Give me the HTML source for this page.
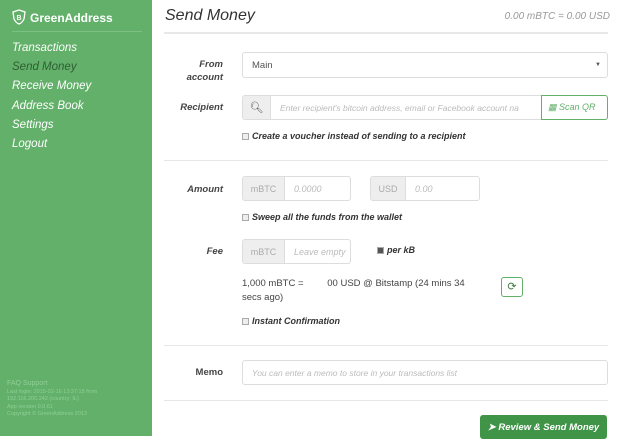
<!DOCTYPE html>
<html><head><style>
*{box-sizing:border-box;margin:0;padding:0}
body{width:624px;height:436px;overflow:hidden;background:#fff;font-family:"Liberation Sans",sans-serif;position:relative}
.sb{position:absolute;left:0;top:0;width:152px;height:436px;background:#62b06a}
.sb .brand{position:absolute;left:12px;top:9px;color:#fff;font-weight:bold;font-size:12px}
.sb .line{position:absolute;left:12px;right:10px;top:31px;border-top:1px solid #7cc183}
.nav{position:absolute;left:12px;top:39px;font-style:italic;font-size:11.5px;color:#fff;line-height:19.2px}
.nav .act{color:#2f5e33}
.foot{position:absolute;left:7px;top:380px;font-size:5.5px;color:#8fd095;line-height:7.5px}
.a{position:absolute}
h1{position:absolute;left:165px;top:7px;font-size:16px;font-style:italic;font-weight:normal;color:#333}
.bal{position:absolute;right:14px;top:11px;font-size:10px;font-style:italic;color:#999}
.hr{position:absolute;left:164px;width:444px;border-top:1px solid #e6e6e6}
.lbl{position:absolute;right:401px;font-size:9.5px;font-style:italic;font-weight:bold;color:#444;text-align:right;line-height:13px}
.box{position:absolute;border:1px solid #ddd;border-radius:3px;font-size:9px;color:#bbb;font-style:italic;padding-left:9px;display:flex;align-items:center;background:#fff}
.add{position:absolute;border:1px solid #ddd;background:#eee;font-size:9px;color:#aaa;display:flex;align-items:center;justify-content:center;border-radius:3px 0 0 3px}
.chk{position:absolute;font-size:9px;font-style:italic;font-weight:bold;color:#333;display:flex;align-items:center}
.chk i{display:inline-block;width:7px;height:7px;border:1px solid #aaa;background:#eee;margin-right:3px}
</style></head><body>
<div class="sb">
<div class="brand"><svg width="14" height="16" viewBox="0 0 14 16" style="vertical-align:-3px;margin-right:4px"><path d="M7 1 L13 3 L12 10 Q10 14 7 15 Q4 14 2 10 L1 3 Z" fill="none" stroke="#fff" stroke-width="1.3"/><text x="4.5" y="11" font-size="7" fill="#fff" font-family="Liberation Sans">B</text></svg>GreenAddress</div>
<div class="line"></div>
<div class="nav">Transactions<br><span class="act">Send Money</span><br>Receive Money<br>Address Book<br>Settings<br>Logout</div>
<div class="foot"><span style="font-size:7px">FAQ Support</span><br>Last login: 2015-02-16 13:37:15 from<br>192.116.200.242 (country: IL)<br>App version 0.0.61<br>Copyright © GreenAddress 2013</div>
</div>
<h1>Send Money</h1>
<div class="bal">0.00 mBTC = 0.00 USD</div>
<div class="hr" style="top:32px;border-top:2px solid #e8e8e8"></div>

<div class="lbl" style="top:58px">From<br>account</div>
<div class="box" style="left:242px;top:52px;width:366px;height:26px;color:#555;font-style:normal;font-size:9.5px">Main<span style="position:absolute;right:6px;font-size:6px;color:#555">▼</span></div>

<div class="lbl" style="top:101px">Recipient</div>
<div class="add" style="left:242px;top:95px;width:29px;height:25px;color:#555;font-size:11px">&#x1F50D;&#xFE0E;</div>
<div class="box" style="left:270px;top:95px;width:272px;height:25px;border-radius:0;font-size:8.5px;white-space:nowrap;overflow:hidden">Enter recipient's bitcoin address, email or Facebook account na</div>
<div class="box" style="left:541px;top:95px;width:67px;height:25px;border:1px solid #62b06a;border-radius:0 3px 3px 0;color:#62b06a;padding-left:6px">▦ Scan QR</div>
<div class="chk" style="left:242px;top:131px"><i></i>Create a voucher instead of sending to a recipient</div>
<div class="hr" style="top:160px"></div>

<div class="lbl" style="top:183px">Amount</div>
<div class="add" style="left:242px;top:176px;width:43px;height:25px">mBTC</div>
<div class="box" style="left:284px;top:176px;width:67px;height:25px;border-radius:0 3px 3px 0">0.0000</div>
<div class="add" style="left:370px;top:176px;width:36px;height:25px">USD</div>
<div class="box" style="left:405px;top:176px;width:75px;height:25px;border-radius:0 3px 3px 0">0.00</div>
<div class="chk" style="left:242px;top:212px"><i></i>Sweep all the funds from the wallet</div>

<div class="lbl" style="top:245px">Fee</div>
<div class="add" style="left:242px;top:239px;width:43px;height:25px">mBTC</div>
<div class="box" style="left:284px;top:239px;width:67px;height:25px;border-radius:0 3px 3px 0">Leave empty</div>
<div class="chk" style="left:377px;top:245px"><i style="background:#555"></i>per kB</div>
<div class="a" style="left:242px;top:277px;font-size:9.5px;color:#444;line-height:14px;width:240px">1,000 mBTC = &nbsp; &nbsp; &nbsp; &nbsp; 00 USD @ Bitstamp (24 mins 34 secs ago)</div>
<div class="a" style="left:501px;top:277px;width:22px;height:20px;border:1px solid #62b06a;border-radius:3px;color:#3c7a41;font-size:11px;text-align:center;line-height:18px">⟳</div>
<div class="chk" style="left:242px;top:316px"><i></i>Instant Confirmation</div>
<div class="hr" style="top:345px"></div>

<div class="lbl" style="top:366px;font-style:normal">Memo</div>
<div class="box" style="left:242px;top:360px;width:366px;height:25px;font-size:8.5px">You can enter a memo to store in your transactions list</div>
<div class="hr" style="top:400px"></div>
<div class="a" style="left:480px;top:415px;width:127px;height:24px;background:#3f9447;border-radius:3px;color:#fff;font-size:9.5px;font-weight:bold;font-style:italic;display:flex;align-items:center;justify-content:center">➤ Review &amp; Send Money</div>
</body></html>
